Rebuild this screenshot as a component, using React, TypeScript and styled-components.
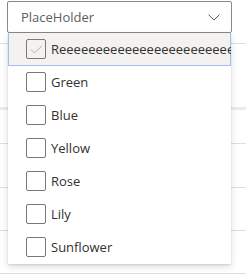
import React from 'react'
import styled, { createGlobalStyle } from 'styled-components'

const GlobalStyle = createGlobalStyle`
  body {
    margin: 0;
    background: #ffffff;
    font-family: 'Open Sans', 'Noto Sans', sans-serif;
    color: #323130;
  }
`

const Page = styled.div`
  padding: 1px 14px 0 7px;
`

const DropdownWrap = styled.div`
  position: relative;
`

const Field = styled.div`
  box-sizing: border-box;
  height: 32px;
  border: 1px solid #8a8886;
  border-radius: 2px;
  display: flex;
  align-items: center;
  justify-content: space-between;
  padding: 0 11px 0 13px;
  font-size: 13px;
  color: #605e5c;
  background: #fff;
`

const Backdrop = styled.div`
  display: flex;
  flex-direction: column;
  margin-left: -7px;
  margin-right: -14px;
`

const Rule = styled.div<{ $top: number; $size?: number; $tone?: string }>`
  margin-top: ${(p) => p.$top}px;
  height: ${(p) => p.$size ?? 1}px;
  background: ${(p) => p.$tone ?? '#e1dfdd'};
`

const Callout = styled.div`
  position: absolute;
  top: 32px;
  left: 1px;
  width: 223px;
  background: #fff;
  box-shadow: 0 3.2px 7.2px rgba(0, 0, 0, 0.132), 0 0.6px 1.8px rgba(0, 0, 0, 0.108);
  overflow: hidden;
`

const Option = styled.div<{ $active?: boolean }>`
  box-sizing: border-box;
  height: 33px;
  display: flex;
  align-items: center;
  gap: 5px;
  padding-left: 17px;
  font-size: 13px;
  white-space: nowrap;
  background: ${(p) => (p.$active ? '#f3f2f1' : '#fff')};
  border: 1px solid ${(p) => (p.$active ? '#9cc1f2' : 'transparent')};
  border-top-width: 0;
`

const Box = styled.span`
  box-sizing: border-box;
  flex: none;
  width: 20px;
  height: 20px;
  border: 1px solid #7a7876;
  border-radius: 2px;
  display: flex;
  align-items: center;
  justify-content: center;
`

const options = ['Reeeeeeeeeeeeeeeeeeeeeeeeeeeeeeeee', 'Green', 'Blue', 'Yellow', 'Rose', 'Lily', 'Sunflower']

export default function App() {
  return (
    <>
      <GlobalStyle />
      <Page>
        <DropdownWrap>
          <Field>
            <span>PlaceHolder</span>
            <svg width="12" height="7" viewBox="0 0 12 7" fill="none">
              <path d="M0.5 0.6 L6 6 L11.5 0.6" stroke="#605e5c" strokeWidth="1" />
            </svg>
          </Field>
          <Backdrop>
            <Rule $top={10} />
            <Rule $top={63} $size={3} $tone="#edebe9" />
            <Rule $top={33} />
            <Rule $top={43} />
            <Rule $top={42} />
            <Rule $top={42} />
          </Backdrop>
          <Callout>
            {options.map((label, i) => (
              <Option key={label} $active={i === 0}>
                <Box>
                  {i === 0 && (
                    <svg width="13" height="9" viewBox="0 0 13 9" fill="none">
                      <path d="M1 4.5 L4.5 8 L12 0.8" stroke="#b3b0ad" strokeWidth="1" />
                    </svg>
                  )}
                </Box>
                <span>{label}</span>
              </Option>
            ))}
          </Callout>
        </DropdownWrap>
      </Page>
    </>
  )
}
